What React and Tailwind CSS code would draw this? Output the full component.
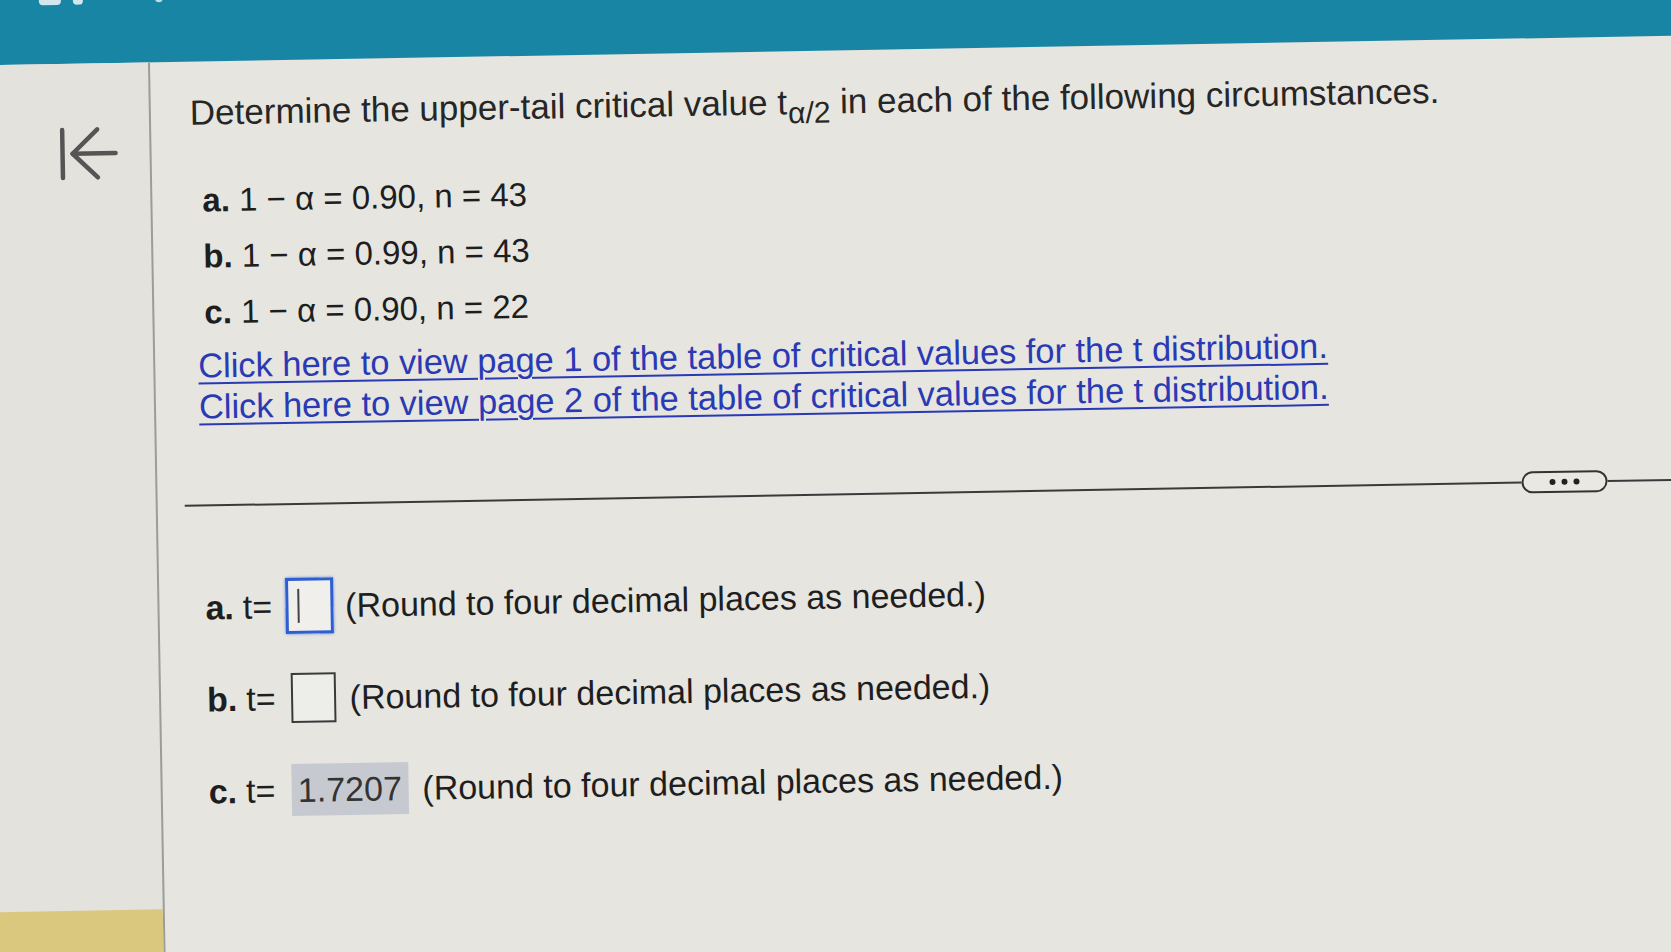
import React from 'react';

const ITEMS = [
  { label: 'a.', conf: '0.90', n: '43' },
  { label: 'b.', conf: '0.99', n: '43' },
  { label: 'c.', conf: '0.90', n: '22' },
];

const LINKS = [
  'Click here to view page 1 of the table of critical values for the t distribution.',
  'Click here to view page 2 of the table of critical values for the t distribution.',
];

const FONT = { fontFamily: '"Liberation Sans", Arial, sans-serif' };

function BackIcon() {
  return (
    <svg width="60" height="54" viewBox="0 0 60 54" fill="none" stroke="#555" strokeWidth="4.5" strokeLinecap="round" strokeLinejoin="round">
      <path d="M3 3 L3 51" />
      <path d="M13 27 L56 27" />
      <path d="M38 3 L13 27 L38 51" />
    </svg>
  );
}

function Hint({ gap }) {
  return <span className={gap}>(Round to four decimal places as needed.)</span>;
}

export default function App() {
  return (
    <div className="w-[1671px] h-[952px] overflow-hidden bg-[#e6e5e0] text-[#1e1e1e]" style={FONT}>
      <div className="w-[1740px] h-[1010px] -ml-[30px] -rotate-1 origin-[30px_65px] flex flex-col bg-[#e6e5e0]">
        {/* top bar */}
        <div className="h-[65px] shrink-0 bg-[#1885a5] flex pl-[30px]">
          <div className="flex gap-3 items-start pl-[40px]">
            <span className="block w-[22px] h-[6px] bg-white/80 rounded-b" />
            <span className="block w-[10px] h-[6px] bg-white/80 rounded-b" />
            <span className="block w-[8px] h-[5px] bg-white/70 rounded-b ml-[60px]" />
          </div>
          <div className="ml-[560px] -mt-[38px] w-[56px] h-[48px] rounded-full bg-[#0f6e8b]" />
        </div>

        <div className="flex flex-1">
          {/* sidebar */}
          <div className="w-[180px] shrink-0 pl-[30px] border-r-2 border-[#9c9c98] bg-[#e3e2dd] flex flex-col">
            <div className="pl-[58px] pt-[63px]">
              <BackIcon />
            </div>
            <div className="mt-auto -ml-[30px] mb-[38px] h-[60px] bg-[#dac87f]" />
          </div>

          {/* content */}
          <div className="flex-1 flex flex-col">
            <h1 className="ml-[39px] mt-[33px] text-[35px] leading-[36px] font-normal text-[#262626] whitespace-nowrap">
              Determine the upper-tail critical value t
              <sub className="text-[30px] relative top-[9px] ml-[1px]">α/2</sub> in each of the following circumstances.
            </h1>

            <div className="ml-[50px] mt-[42px] text-[33px]">
              {ITEMS.map(it => (
                <div key={it.label} className="leading-[56px] whitespace-nowrap">
                  <span className="font-bold">{it.label}</span> 1 − α = {it.conf}, n = {it.n}
                </div>
              ))}
            </div>

            <div className="ml-[43px] mt-[5px] text-[34.4px]">
              {LINKS.map(l => (
                <div key={l} className="leading-[41px] whitespace-nowrap">
                  <a className="text-[#2a39b4] underline decoration-2 underline-offset-[5px]" href="#">
                    {l}
                  </a>
                </div>
              ))}
            </div>

            <div className="ml-[27px] mt-[67px] h-[22px] flex items-center">
              <div className="w-[1337px] h-[2px] bg-[#3a3a3a]" />
              <div className="w-[86px] h-[22px] shrink-0 rounded-full border-2 border-[#333] bg-[#e9e8e3] flex items-center justify-center gap-[6px]">
                <span className="w-[6px] h-[6px] rounded-full bg-[#222]" />
                <span className="w-[6px] h-[6px] rounded-full bg-[#222]" />
                <span className="w-[6px] h-[6px] rounded-full bg-[#222]" />
              </div>
              <div className="flex-1 h-[2px] bg-[#3a3a3a]" />
            </div>

            <div className="ml-[46px] mt-[61px] text-[34px] flex flex-col gap-[32px]">
              <div className="h-[60px] flex items-center whitespace-nowrap">
                <span className="font-bold">a.</span>
                <span className="ml-[9px]">t=</span>
                <span className="ml-[13px] w-[48px] h-[56px] border-[3px] border-[#2f5fce] bg-white/40 flex items-center pl-[9px] shadow-[0_0_3px_#5a85e0]">
                  <span className="w-[2px] h-[34px] bg-[#444]" />
                </span>
                <Hint gap="ml-[12px]" />
              </div>
              <div className="h-[60px] flex items-center whitespace-nowrap">
                <span className="font-bold">b.</span>
                <span className="ml-[9px]">t=</span>
                <span className="ml-[15px] w-[45px] h-[50px] border-2 border-[#3a3a3a] bg-white/30" />
                <Hint gap="ml-[14px]" />
              </div>
              <div className="h-[60px] flex items-center whitespace-nowrap">
                <span className="font-bold">c.</span>
                <span className="ml-[9px]">t=</span>
                <span className="ml-[16px] w-[117px] h-[52px] bg-[#c6cad0] text-[#333] flex items-center justify-center">
                  1.7207
                </span>
                <Hint gap="ml-[14px]" />
              </div>
            </div>
          </div>
        </div>
      </div>
    </div>
  );
}
